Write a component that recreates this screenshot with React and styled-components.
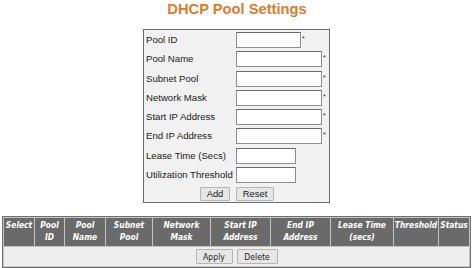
import React from "react";
import styled, { createGlobalStyle } from "styled-components";

const GlobalStyle = createGlobalStyle`
  html, body {
    margin: 0;
    padding: 0;
    background: #ffffff;
  }
  body {
    font-family: "Liberation Sans", Arial, sans-serif;
  }
`;

const Page = styled.div`
  width: 474px;
  height: 268px;
  overflow: hidden;
`;

const Title = styled.h1`
  margin: 0;
  padding-top: 1px;
  height: 28px;
  text-align: center;
  font-family: "Liberation Sans", Arial, sans-serif;
  font-size: 14.7px;
  line-height: 17px;
  font-weight: bold;
  color: #e07a2c;
`;

const FormBox = styled.div`
  width: 182px;
  margin: 0 0 0 143px;
  padding: 2px 1px 1px 2px;
  border: 1px solid #6c6c6c;
  background: #f1f1f1;
  display: grid;
  grid-template-columns: 90px 1fr;
  row-gap: 3.3px;
  align-items: center;
`;

const Label = styled.label`
  font-size: 9.6px;
  color: #1a1a1a;
  white-space: nowrap;
  line-height: 16px;
`;

const Field = styled.div`
  display: flex;
  align-items: flex-start;
  height: 16px;
`;

const Input = styled.input`
  box-sizing: border-box;
  width: ${({ $w }) => $w}px;
  height: 16px;
  margin: 0;
  padding: 0 2px;
  border: 1px solid #8e8e8e;
  border-top-color: #6a6a6a;
  background: #ffffff;
  font-size: 9px;
`;

const Star = styled.span`
  font-size: 7px;
  line-height: 7px;
  margin: 3px 0 0 1px;
  color: #333;
`;

const ButtonRow = styled.div`
  grid-column: 1 / span 2;
  display: flex;
  justify-content: center;
  gap: ${({ $gap }) => $gap}px;
  margin-top: ${({ $top }) => $top || 0}px;
`;

const Button = styled.button`
  box-sizing: border-box;
  height: 14px;
  width: ${({ $w }) => $w}px;
  padding: 0;
  margin: 0;
  border: 1px solid #b5b5b5;
  border-radius: 1px;
  background: #e6e6e6;
  color: #1a1a1a;
  font-family: "Liberation Sans", Arial, sans-serif;
  font-size: 9.4px;
  line-height: 12px;
`;

const TableButton = styled(Button)`
  height: 15px;
  font-family: "DejaVu Sans Condensed", "DejaVu Sans", sans-serif;
  font-stretch: condensed;
  font-size: 8.6px;
`;

const PoolTable = styled.table`
  width: 469px;
  margin: 13px 0 0 2px;
  table-layout: fixed;
  border-collapse: separate;
  border-spacing: 1px;
  border: 1px solid #707070;
  background: #c4c4c4;
`;

const HeadCell = styled.th`
  width: ${({ $w }) => $w}px;
  height: 26px;
  padding: 0;
  background: #6a6a6a;
  color: #ffffff;
  font-family: "DejaVu Sans Condensed", "DejaVu Sans", sans-serif;
  font-stretch: condensed;
  font-size: 8.4px;
  font-weight: bold;
  font-style: italic;
  line-height: 11.5px;
  text-align: center;
  vertical-align: top;
  padding-top: 2px;
  overflow: hidden;
  white-space: ${({ $nowrap }) => ($nowrap ? "nowrap" : "normal")};
`;

const ActionCell = styled.td`
  height: 19px;
  padding: 0;
  background: #eeeeee;
`;

const fields = [
  { label: "Pool ID", w: 65, req: true },
  { label: "Pool Name", w: 86, req: true },
  { label: "Subnet Pool", w: 86, req: true },
  { label: "Network Mask", w: 86, req: true },
  { label: "Start IP Address", w: 86, req: true },
  { label: "End IP Address", w: 86, req: true },
  { label: "Lease Time (Secs)", w: 60 },
  { label: "Utilization Threshold", w: 60 },
];

const columns = [
  { title: "Select", w: 30, nowrap: true },
  { title: ["Pool", "ID"], w: 29 },
  { title: ["Pool", "Name"], w: 40 },
  { title: ["Subnet", "Pool"], w: 46 },
  { title: ["Network", "Mask"], w: 57 },
  { title: ["Start IP", "Address"], w: 59 },
  { title: ["End IP", "Address"], w: 59 },
  { title: ["Lease Time", "(secs)"], w: 62 },
  { title: "Threshold", w: 44, nowrap: true },
  { title: "Status", w: 30, nowrap: true },
];

export default function App() {
  return (
    <>
      <GlobalStyle />
      <Page>
        <Title>DHCP Pool Settings</Title>
        <FormBox>
          {fields.map((f) => (
            <React.Fragment key={f.label}>
              <Label>{f.label}</Label>
              <Field>
                <Input $w={f.w} />
                {f.req && <Star>*</Star>}
              </Field>
            </React.Fragment>
          ))}
          <ButtonRow $gap={6} $top={1}>
            <Button $w={30}>Add</Button>
            <Button $w={38}>Reset</Button>
          </ButtonRow>
        </FormBox>

        <PoolTable>
          <thead>
            <tr>
              {columns.map((c, i) => (
                <HeadCell key={i} $w={c.w} $nowrap={c.nowrap}>
                  {Array.isArray(c.title) ? (
                    <>
                      {c.title[0]}
                      <br />
                      {c.title[1]}
                    </>
                  ) : (
                    c.title
                  )}
                </HeadCell>
              ))}
            </tr>
          </thead>
          <tbody>
            <tr>
              <ActionCell colSpan={10}>
                <ButtonRow $gap={4}>
                  <TableButton $w={37}>Apply</TableButton>
                  <TableButton $w={41}>Delete</TableButton>
                </ButtonRow>
              </ActionCell>
            </tr>
          </tbody>
        </PoolTable>
      </Page>
    </>
  );
}
